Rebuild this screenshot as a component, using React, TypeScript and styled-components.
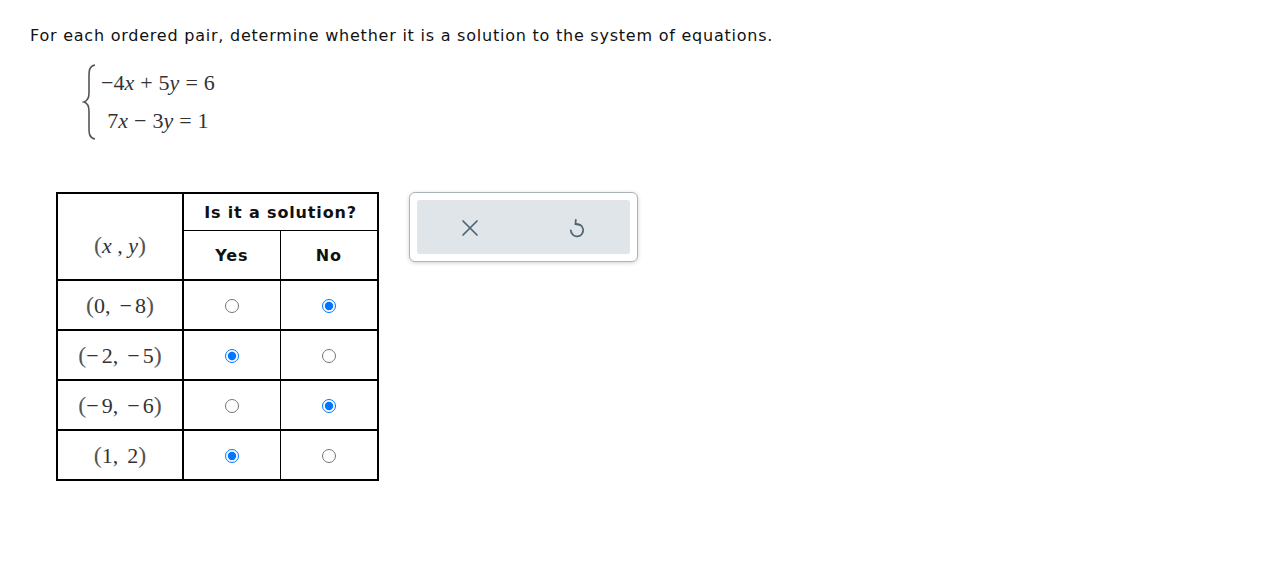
import React from 'react'
import styled, { createGlobalStyle } from 'styled-components'

const GlobalStyle = createGlobalStyle`
  body {
    margin: 0;
    background: #fff;
    font-family: "DejaVu Sans", Verdana, sans-serif;
    color: #111;
  }
`

const Page = styled.div`
  padding: 26px 30px;
`

const Prompt = styled.p`
  margin: 0;
  font-size: 16px;
  line-height: 20px;
  letter-spacing: 0.77px;
`

const SystemWrap = styled.div`
  display: flex;
  align-items: center;
  margin: 17px 0 0 52px;
  gap: 3px;
`

const Equations = styled.div`
  display: flex;
  flex-direction: column;
  align-items: center;
  gap: 12px;
  font-family: "Liberation Serif", "Times New Roman", serif;
  font-size: 22px;
  line-height: 26px;
  color: #333;
`

const Var = styled.i`
  font-style: italic;
`

const Op = styled.span`
  margin: 0 6px;
`

const Work = styled.div`
  display: flex;
  align-items: flex-start;
  gap: 30px;
  margin: 51px 0 0 26px;
`

const Grid = styled.table`
  border-collapse: collapse;
  width: 321px;
  table-layout: fixed;
`

const Cell = styled.td<{ $thinLeft?: boolean; $thinRight?: boolean; $thinTop?: boolean; $thinBottom?: boolean }>`
  border: 2px solid #000;
  border-left-width: ${({ $thinLeft }) => ($thinLeft ? '1px' : '2px')};
  border-right-width: ${({ $thinRight }) => ($thinRight ? '1px' : '2px')};
  border-top-width: ${({ $thinTop }) => ($thinTop ? '1px' : '2px')};
  border-bottom-width: ${({ $thinBottom }) => ($thinBottom ? '1px' : '2px')};
  text-align: center;
  vertical-align: middle;
  padding: 0;
  height: 48px;
`

const HeadCell = styled(Cell)<{ $tall?: number }>`
  font-weight: bold;
  font-size: 16px;
  letter-spacing: 0.85px;
  color: #111;
  height: ${({ $tall }) => $tall ?? 48}px;
`

const MathCell = styled(Cell)<{ $offset?: number }>`
  font-family: "Liberation Serif", "Times New Roman", serif;
  font-weight: normal;
  font-size: 22px;
  color: #333;
  padding-top: ${({ $offset }) => $offset ?? 0}px;
`

const Paren = styled.span`
  font-size: 24px;
  color: #555;
`

const Sign = styled.span`
  margin-right: 3px;
`

const Comma = styled.span`
  margin-right: 9px;
`

const Radio = styled.input`
  margin: 0;
  width: 14px;
  height: 14px;
  vertical-align: middle;
`

const Panel = styled.div`
  width: 213px;
  height: 54px;
  padding: 7px;
  border: 1px solid #aab5ba;
  border-radius: 6px;
  box-shadow: 0 1px 4px rgba(0, 0, 0, 0.18);
  background: #fff;
`

const PanelInner = styled.div`
  display: flex;
  height: 100%;
  background: #dfe5e8;
  border-radius: 3px;
`

const IconButton = styled.button`
  flex: 1;
  display: flex;
  align-items: center;
  justify-content: center;
  border: none;
  background: transparent;
  padding: 2px 0 0;
  cursor: pointer;
`

const pairs: { x: number; y: number; yes: boolean }[] = [
  { x: 0, y: -8, yes: false },
  { x: -2, y: -5, yes: true },
  { x: -9, y: -6, yes: false },
  { x: 1, y: 2, yes: true },
]

function Brace() {
  return (
    <svg width="16" height="78" viewBox="0 0 16 78">
      <path
        d="M13 2 C7 3 7 8 7 14 L7 30 C7 36 5 38 2 39 C5 40 7 42 7 48 L7 64 C7 70 7 75 13 76"
        fill="none"
        stroke="#555"
        strokeWidth="1.6"
      />
    </svg>
  )
}

function CloseIcon() {
  return (
    <svg width="18" height="18" viewBox="0 0 18 18">
      <path d="M2 2 L16 16 M16 2 L2 16" stroke="#4b6572" strokeWidth="1.7" strokeLinecap="round" />
    </svg>
  )
}

function UndoIcon() {
  return (
    <svg width="18" height="20" viewBox="0 0 18 20">
      <path
        d="M7.5 6.2 A6.2 6.2 0 1 1 2.8 12.4"
        fill="none"
        stroke="#4b6572"
        strokeWidth="1.7"
        strokeLinecap="round"
      />
      <path
        d="M7.8 1.8 L7.5 6.2 L11.6 7"
        fill="none"
        stroke="#4b6572"
        strokeWidth="1.7"
        strokeLinecap="round"
        strokeLinejoin="round"
      />
    </svg>
  )
}

function Num({ value }: { value: number }) {
  if (value < 0) {
    return (
      <>
        <Sign>−</Sign>
        {Math.abs(value)}
      </>
    )
  }
  return <>{value}</>
}

function Pair({ x, y }: { x: number; y: number }) {
  return (
    <>
      <Paren>(</Paren>
      <Num value={x} />
      <Comma>,</Comma>
      <Num value={y} />
      <Paren>)</Paren>
    </>
  )
}

export default function App() {
  return (
    <Page>
      <GlobalStyle />
      <Prompt>For each ordered pair, determine whether it is a solution to the system of equations.</Prompt>
      <SystemWrap>
        <Brace />
        <Equations>
          <span>
            −4<Var>x</Var>
            <Op>+</Op>5<Var>y</Var>
            <Op>=</Op>6
          </span>
          <span>
            7<Var>x</Var>
            <Op>−</Op>3<Var>y</Var>
            <Op>=</Op>1
          </span>
        </Equations>
      </SystemWrap>
      <Work>
        <Grid>
          <colgroup>
            <col style={{ width: 126 }} />
            <col style={{ width: 97 }} />
            <col style={{ width: 98 }} />
          </colgroup>
          <tbody>
            <tr>
              <MathCell as="th" rowSpan={2} $offset={18}>
                <Paren>(</Paren>
                <Var>x</Var> , <Var>y</Var>
                <Paren>)</Paren>
              </MathCell>
              <HeadCell as="th" colSpan={2} $thinBottom $tall={36}>
                Is it a solution?
              </HeadCell>
            </tr>
            <tr>
              <HeadCell as="th" $thinTop $thinRight>
                Yes
              </HeadCell>
              <HeadCell as="th" $thinTop $thinLeft>
                No
              </HeadCell>
            </tr>
            {pairs.map((p, i) => (
              <tr key={i}>
                <MathCell>
                  <Pair x={p.x} y={p.y} />
                </MathCell>
                <Cell $thinRight>
                  <Radio type="radio" name={`pair-${i}`} defaultChecked={p.yes} />
                </Cell>
                <Cell $thinLeft>
                  <Radio type="radio" name={`pair-${i}`} defaultChecked={!p.yes} />
                </Cell>
              </tr>
            ))}
          </tbody>
        </Grid>
        <Panel>
          <PanelInner>
            <IconButton aria-label="Clear">
              <CloseIcon />
            </IconButton>
            <IconButton aria-label="Undo">
              <UndoIcon />
            </IconButton>
          </PanelInner>
        </Panel>
      </Work>
    </Page>
  )
}
